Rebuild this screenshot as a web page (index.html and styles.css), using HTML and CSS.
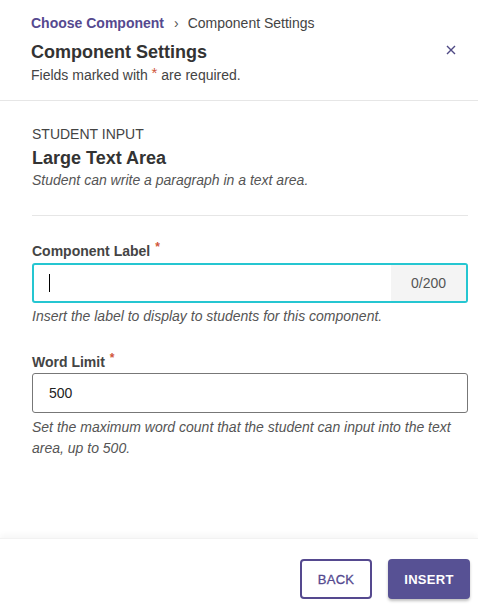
FILE: index.html
```html
<!DOCTYPE html>
<html>
<head>
<meta charset="utf-8">
<link rel="stylesheet" href="styles.css">
</head>
<body>
<div class="page">
  <header class="header">
    <div class="header-text">
      <nav class="crumbs">
        <span class="crumb-link">Choose Component</span>
        <span class="crumb-sep">&#8250;</span>
        <span class="crumb-current">Component Settings</span>
      </nav>
      <h1 class="title">Component Settings</h1>
      <p class="subtitle">Fields marked with <span class="req req-lg">*</span> are required.</p>
    </div>
    <button class="close" aria-label="Close">
      <svg width="10" height="10" viewBox="0 0 10 10"><path d="M1 1 L9 9 M9 1 L1 9" stroke="#4f4a85" stroke-width="1.4" fill="none"/></svg>
    </button>
  </header>

  <main class="content">
    <section class="summary">
      <div class="overline">STUDENT INPUT</div>
      <h2 class="comp-name">Large Text Area</h2>
      <p class="comp-desc">Student can write a paragraph in a text area.</p>
    </section>

    <div class="field">
      <label class="label">Component Label <span class="req req-sm">*</span></label>
      <div class="input focused">
        <span class="input-value"><span class="caret"></span></span>
        <span class="counter">0/200</span>
      </div>
      <p class="help">Insert the label to display to students for this component.</p>
    </div>

    <div class="field field-2">
      <label class="label">Word Limit <span class="req req-sm">*</span></label>
      <div class="input">
        <span class="input-value">500</span>
      </div>
      <p class="help">Set the maximum word count that the student can input into the text area, up to 500.</p>
    </div>
  </main>

  <footer class="footer">
    <button class="btn btn-outline">BACK</button>
    <button class="btn btn-primary">INSERT</button>
  </footer>
</div>
</body>
</html>
```

FILE: styles.css
```css
* { box-sizing: border-box; }
html, body { margin: 0; padding: 0; }
body {
  font-family: "Liberation Sans", Arial, sans-serif;
  color: #333;
  background: #fff;
}
.page {
  min-height: 100vh;
  display: flex;
  flex-direction: column;
}
.header {
  display: flex;
  justify-content: space-between;
  align-items: flex-start;
  padding: 15px 22px 0 31px;
  height: 101px;
  border-bottom: 1px solid #e6e6e6;
  flex-shrink: 0;
}
.crumbs {
  font-size: 14px;
  line-height: 16px;
  display: flex;
  align-items: center;
}
.crumb-link { color: #55498f; font-weight: bold; }
.crumb-sep { color: #555; margin: 0 9px 0 10px; font-size: 14px; }
.crumb-current { color: #444; }
.title {
  margin: 10px 0 0 0;
  font-size: 18px;
  line-height: 22px;
  font-weight: bold;
  color: #333;
}
.subtitle {
  margin: 4px 0 0 0;
  font-size: 14px;
  line-height: 16px;
  color: #444;
}
.req { color: #d0563a; position: relative; }
.req-lg { font-size: 15px; top: -2px; }
.req-sm { font-size: 12px; top: -5px; margin-left: 1px; }
.close {
  margin-top: 30px;
  border: 0;
  background: none;
  padding: 0;
  width: 10px;
  height: 10px;
  display: flex;
}
.content {
  padding: 25px 10px 0 32px;
}
.summary {
  border-bottom: 1px solid #e6e6e6;
  padding-bottom: 27px;
}
.overline {
  font-size: 14px;
  line-height: 16px;
  color: #444;
}
.comp-name {
  margin: 5px 0 0 0;
  font-size: 18px;
  line-height: 22px;
  font-weight: bold;
  color: #333;
}
.comp-desc {
  margin: 3px 0 0 0;
  font-size: 14px;
  line-height: 16px;
  font-style: italic;
  color: #555;
}
.field { margin-top: 27px; }
.label {
  display: block;
  font-size: 14px;
  line-height: 16px;
  font-weight: bold;
  color: #444;
}
.input {
  margin-top: 3px;
  height: 40px;
  border: 1px solid #777;
  border-radius: 3px;
  display: flex;
  align-items: stretch;
  overflow: hidden;
}
.field-2 .input { margin-top: 2px; }
.input.focused {
  border: 2px solid #25c6d1;
}
.input-value {
  flex: 1;
  display: flex;
  align-items: center;
  padding-left: 16px;
  font-size: 14px;
  color: #222;
}
.focused .input-value { padding-left: 15px; }
.caret {
  display: block;
  width: 1px;
  height: 18px;
  background: #000;
}
.counter {
  width: 75px;
  background: #f4f4f4;
  display: flex;
  align-items: center;
  justify-content: center;
  font-size: 14px;
  color: #555;
}
.help {
  margin: 3px 0 0 0;
  font-size: 14px;
  line-height: 21px;
  font-style: italic;
  color: #555;
}
.field-2 .help { margin-top: 4px; }
.footer {
  margin-top: auto;
  height: 77px;
  display: flex;
  justify-content: flex-end;
  align-items: flex-start;
  padding: 20px 8px 0 0;
  gap: 16px;
  box-shadow: 0 -3px 6px rgba(0,0,0,0.04);
  border-top: 1px solid #f2f2f2;
  flex-shrink: 0;
}
.btn {
  height: 40px;
  border-radius: 4px;
  font-family: "Liberation Sans", Arial, sans-serif;
  font-size: 13px;
  font-weight: bold;
  letter-spacing: 0.3px;
  cursor: pointer;
}
.btn-outline {
  width: 72px;
  background: #fff;
  color: #55498f;
  border: 2px solid #55498f;
  font-weight: normal;
  -webkit-text-stroke: 0.3px #55498f;
}
.btn-primary {
  width: 82px;
  background: #575194;
  color: #fff;
  border: 0;
  box-shadow: 0 2px 3px rgba(0,0,0,0.25);
}
```
